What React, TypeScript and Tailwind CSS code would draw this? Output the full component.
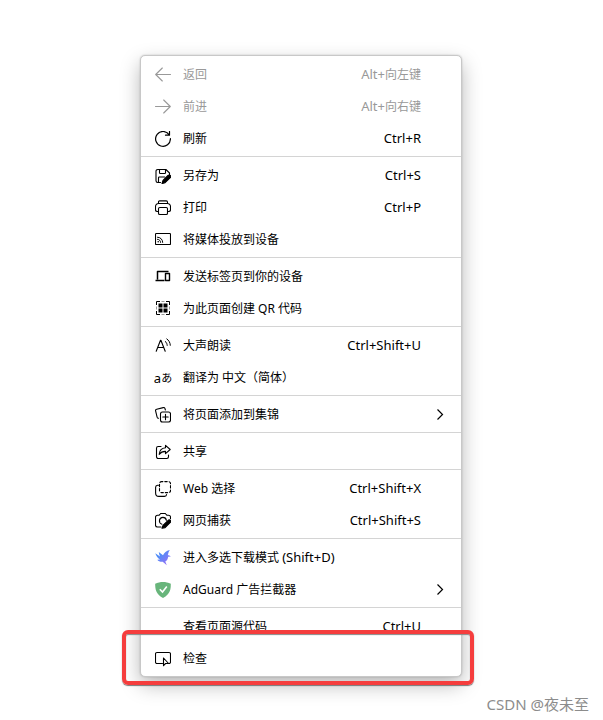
import { Fragment, type ReactNode } from "react"

type Item = {
  label: string
  icon?: ReactNode
  shortcut?: string
  disabled?: boolean
  submenu?: boolean
  highlighted?: boolean
}

function Icon({ children }: { children: ReactNode }) {
  return (
    <svg
      viewBox="0 0 16 16"
      className="h-4 w-4"
      fill="none"
      stroke="currentColor"
      strokeWidth="1.1"
      strokeLinecap="round"
      strokeLinejoin="round"
      aria-hidden="true"
    >
      {children}
    </svg>
  )
}

const icons = {
  back: (
    <Icon>
      <path d="M15.5 7.5H.7M7.3 1 .7 7.5l6.6 6.5" />
    </Icon>
  ),
  forward: (
    <Icon>
      <path d="M.5 7.5h14.8M8.7 1l6.6 6.5L8.7 14" />
    </Icon>
  ),
  refresh: (
    <Icon>
      <path d="M14.300 4A7.400 7.400 0 1 0 15.400 7.500M14.500.5v3.700h-4" strokeWidth="1.200" />
    </Icon>
  ),
  save: (
    <Icon>
      <path d="M5.500 14.500H2.700A1.700 1.700 0 0 1 1 12.800V3.200a1.700 1.700 0 0 1 1.700-1.700h8.200L14.500 5v2M4.500 1.500v3.200c0 .5.3.8.8.8h4.400c.5 0 .8-.3.8-.8V1.500M3.500 14.500V9.800c0-.5.3-.8.8-.8h5.400" />
      <path d="M7 15.600 8 12.500l5-5c.7-.7 1.800-.6 2.300 0 .6.6.6 1.600 0 2.200l-5.200 5z" fill="currentColor" />
    </Icon>
  ),
  print: (
    <Icon>
      <path d="M3.500 11.500H2.200A1.700 1.700 0 0 1 .5 9.800V6.500a3 3 0 0 1 3-3h9a3 3 0 0 1 3 3v3.300a1.700 1.700 0 0 1-1.700 1.700h-1.300M3.500 3.500V2.200C3.500 1.300 4 .9 4.700.9h6.600c.7 0 1.200.4 1.200 1.300v1.300" />
      <rect x="3.500" y="7.500" width="9" height="7" rx="1.300" />
    </Icon>
  ),
  cast: (
    <Icon>
      <rect x=".5" y="1.500" width="15" height="11" rx=".8" />
      <path d="M2.500 5.200c2.900 0 5.200 2.200 5.200 5.200M2.500 7.300c1.700 0 3.100 1.300 3.100 3.100" strokeWidth="1" />
      <circle cx="3.200" cy="9.800" r=".8" fill="currentColor" stroke="none" />
    </Icon>
  ),
  devices: (
    <Icon>
      <path d="M13.500 2.500h-11v8M.5 11.500h9" strokeWidth="1.500" strokeLinecap="butt" />
      <rect x="10.500" y="4.500" width="4" height="7" strokeWidth="1.400" />
    </Icon>
  ),
  qr: (
    <Icon>
      <path d="M1.500 4V.5H5M11 .5h3.500V4M14.500 10v3.500H11M5 13.500H1.500V10" strokeWidth="1" strokeLinecap="butt" />
      <path d="M6.500.5h3M6.500 13.500h3M1.500 5.500v3M14.500 5.500v3" strokeWidth="1" strokeLinecap="butt" strokeOpacity=".4" />
      <path d="M3.500 2.500h4v4h-4zM8.500 2.500h4v4h-4zM3.500 7.500h4v4h-4zM8.500 7.500h4v4h-4z" fill="currentColor" stroke="none" />
    </Icon>
  ),
  readAloud: (
    <Icon>
      <path d="m1.200 13.300 4.300-11h.4l4.300 11M2.700 9.500h6" />
      <path d="M10.300 3.500c1.300 1 1.800 2.300 1.900 3.900M11.800.9c2.200 1.500 3.400 3.700 3.500 6.400" strokeWidth="1" />
    </Icon>
  ),
  translate: (
    <span className="flex h-4 w-4 items-center justify-center font-['Noto_Sans','Noto_Sans_CJK_SC',sans-serif] text-[13px] leading-4 whitespace-nowrap">
      a<span className="text-[11px] leading-4">あ</span>
    </span>
  ),
  collections: (
    <Icon>
      <path d="M3.500 11.300c-.7 0-1.200-.4-1.400-1.100L.6 3.900c-.2-.8.3-1.500 1.100-1.700L8.200.6c.8-.2 1.600.3 1.800 1l.4 1.400" />
      <rect x="5.500" y="5" width="10" height="10" rx="2" />
      <path d="M10.500 7.300v5.400M7.800 10h5.400" />
    </Icon>
  ),
  share: (
    <Icon>
      <path d="M6 2.500H3.200A1.700 1.700 0 0 0 1.500 4.200v8.600a1.700 1.700 0 0 0 1.700 1.700h8.600a1.700 1.700 0 0 0 1.700-1.700V11" />
      <path d="M10.500 1.400 15.200 5.500l-4.700 4.100V7.400C7.700 7.300 5.800 8.200 4.200 10.300c.3-3.800 2.500-6.300 6.300-6.600z" />
    </Icon>
  ),
  webSelect: (
    <Icon>
      <path d="M3.500 4.200h-.9C1.500 4.300.6 5 .6 6.200V12c0 2 1.300 3.400 3.300 3.400h5.600c1.200 0 2-.7 2.100-1.900" />
      <rect x="4.500" y=".6" width="11" height="11" rx="2" strokeDasharray="2.400 1.900" strokeDashoffset="1" />
    </Icon>
  ),
  capture: (
    <Icon>
      <path d="M6 14H2.500a2 2 0 0 1-2-2V4.200a2 2 0 0 1 2-2h1.700l1-1.200c.2-.3.500-.5.900-.5h3.800c.4 0 .7.200.9.500l1 1.200h1.700a2 2 0 0 1 2 2v1.500" />
      <path d="M7 11.200A3.500 3.500 0 1 1 11.400 7.300" />
      <path d="M7 15.300 8 12.500l5.200-5.200c.6-.6 1.500-.6 2.100 0 .6.600.6 1.500 0 2.100l-5.200 5.200z" fill="currentColor" />
    </Icon>
  ),
  bird: (
    <svg viewBox="0 0 16 16" className="h-4 w-4" aria-hidden="true">
      <defs>
        <linearGradient id="bird" x1="0" y1="0" x2="1" y2="1">
          <stop offset="0.300" stopColor="#4f8cf7" />
          <stop offset="1" stopColor="#a86af5" />
        </linearGradient>
      </defs>
      <path d="M3.800 2 8 5.200C9.200 2.800 11.200 1 14.800.1 13.300 2 13.300 3.800 12.800 5.200c1.100-.3 2.100.4 3 1.300l-2.600.2c-.3 2.300-1.300 3.800-2.900 4.700l1.500 3.800-4.100-3.400c-2.200.3-4.200-.4-5.400-2l2.800-.3C2.900 8.500 1.200 6.300.3 3.300L5 6.600C4.300 5.200 3.900 3.600 3.800 2z" fill="url(#bird)" />
    </svg>
  ),
  shield: (
    <svg viewBox="0 0 16 16" className="h-4 w-4" aria-hidden="true">
      <path d="M8 0C5.500 0 2.500.5.200 1.700c0 5 .3 10.300 7.800 14.300 7.500-4 7.800-9.300 7.800-14.300C13.500.5 10.500 0 8 0z" fill="#68b57b" />
      <path d="m4.800 7.200 2.700 2.900 4.300-5.600" fill="none" stroke="#fff" strokeWidth="1.600" />
    </svg>
  ),
  inspect: (
    <Icon>
      <path d="M7.500 12.500H2a1.500 1.500 0 0 1-1.500-1.500V3A1.500 1.500 0 0 1 2 1.500h12A1.500 1.500 0 0 1 15.500 3v8a1.500 1.500 0 0 1-1.500 1.500" />
      <path d="M8.500 7v7.700l2.100-2.200h3z" />
    </Icon>
  ),
}

const groups: Item[][] = [
  [
    { label: "返回", icon: icons.back, shortcut: "Alt+向左键", disabled: true },
    { label: "前进", icon: icons.forward, shortcut: "Alt+向右键", disabled: true },
    { label: "刷新", icon: icons.refresh, shortcut: "Ctrl+R" },
  ],
  [
    { label: "另存为", icon: icons.save, shortcut: "Ctrl+S" },
    { label: "打印", icon: icons.print, shortcut: "Ctrl+P" },
    { label: "将媒体投放到设备", icon: icons.cast },
  ],
  [
    { label: "发送标签页到你的设备", icon: icons.devices },
    { label: "为此页面创建 QR 代码", icon: icons.qr },
  ],
  [
    { label: "大声朗读", icon: icons.readAloud, shortcut: "Ctrl+Shift+U" },
    { label: "翻译为 中文（简体）", icon: icons.translate },
  ],
  [{ label: "将页面添加到集锦", icon: icons.collections, submenu: true }],
  [{ label: "共享", icon: icons.share }],
  [
    { label: "Web 选择", icon: icons.webSelect, shortcut: "Ctrl+Shift+X" },
    { label: "网页捕获", icon: icons.capture, shortcut: "Ctrl+Shift+S" },
  ],
  [
    { label: "进入多选下载模式 (Shift+D)", icon: icons.bird },
    { label: "AdGuard 广告拦截器", icon: icons.shield, submenu: true },
  ],
  [
    { label: "查看页面源代码", shortcut: "Ctrl+U" },
    { label: "检查", icon: icons.inspect, highlighted: true },
  ],
]

// key combinations are set one size larger than the Chinese text around them
function KeyText({ text }: { text: string }) {
  return text.split(/([A-Za-z()]+\+[A-Za-z()+]*)/).map((part, i) =>
    part.includes("+") ? (
      <span key={i} className="text-[13px] leading-none">
        {part}
      </span>
    ) : (
      part
    )
  )
}

function MenuItem({ item }: { item: Item }) {
  return (
    <li role="none" className="relative">
      <button
        type="button"
        role="menuitem"
        disabled={item.disabled}
        aria-haspopup={item.submenu ? "menu" : undefined}
        className="flex h-8 w-full items-center pt-0.5 pl-3.5 text-left text-black disabled:text-[#999]"
      >
        <span className="mr-3 h-4 w-4 shrink-0">{item.icon}</span>
        <span className="flex-1 whitespace-nowrap">
          <KeyText text={item.label} />
        </span>
        <span className="whitespace-nowrap">
          {item.shortcut && <KeyText text={item.shortcut} />}
        </span>
        <span className="flex w-10 shrink-0 justify-center">
          {item.submenu && (
            <svg viewBox="0 0 8 12" className="mr-0.5 h-3 w-2" fill="none" stroke="currentColor" strokeWidth="1.200" aria-hidden="true">
              <path d="m1.500.5 5 5-5 5" />
            </svg>
          )}
        </span>
      </button>
      {item.highlighted && (
        <div className="pointer-events-none absolute -top-3 -right-[13px] -bottom-[11px] -left-[19px] rounded-md border-4 border-[#f53d3d] shadow-[0_1px_1px_#777,inset_0_1px_1px_#888]" />
      )}
    </li>
  )
}

export default function App() {
  return (
    <main className="relative min-h-screen bg-white pt-[55px] pr-4 pb-10 pl-[15px] font-['Noto_Sans','Noto_Sans_CJK_SC',sans-serif] text-xs">
      <ul
        role="menu"
        className="mx-auto w-full max-w-[322px] rounded-[5px] border border-[#c8c8c8] bg-white py-0.5 shadow-[0_0_2px_rgba(0,0,0,0.2),0_8px_20px_rgba(0,0,0,0.28)]"
      >
        {groups.map((group, i) => (
          <Fragment key={i}>
            {i > 0 && <li role="separator" className="my-0.5 h-px bg-[#d4d4d4]" />}
            {group.map((item) => (
              <MenuItem key={item.label} item={item} />
            ))}
          </Fragment>
        ))}
      </ul>
      <p className="absolute right-3.5 bottom-1 text-[15px] leading-6 text-[#8c8c8c]">CSDN @夜未至</p>
    </main>
  )
}
